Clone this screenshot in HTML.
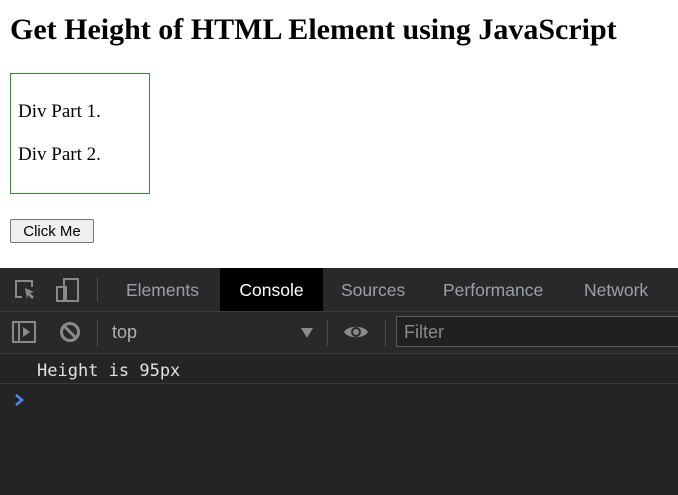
<!DOCTYPE html>
<html><head><style>
body{margin:0;width:678px;height:495px;overflow:hidden;background:#fff;font-family:"Liberation Serif",serif;position:relative}
h1{position:absolute;left:10px;top:13px;margin:0;font-size:30px;font-weight:bold;white-space:nowrap}
.box{position:absolute;left:10px;top:73px;width:138px;height:119px;border:1px solid #3a8a3a}
.box p{position:absolute;left:7px;margin:0;font-size:19px}
button{position:absolute;left:10px;top:219px;width:84px;height:24px;font-family:"Liberation Sans",sans-serif;font-size:15px;background:#efefef;border:1px solid #767676;border-radius:2px;padding:0}
.dt{position:absolute;left:0;top:268px;width:678px;height:227px;background:#242424;font-family:"Liberation Sans",sans-serif}
.tabs{position:absolute;left:0;top:0;width:678px;height:43px;background:#29292b;border-bottom:1px solid #3d3d3d}
.tab{position:absolute;top:0;height:43px;line-height:44px;color:#9aa0a6;font-size:17.5px}
.tb{position:absolute;left:0;top:44px;width:678px;height:41px;background:#29292b;border-bottom:1px solid #3d3d3d}
.sep{position:absolute;width:1px;background:#4a4a4a}
</style></head><body>
<h1>Get Height of HTML Element using JavaScript</h1>
<div class="box"><p style="top:27px">Div Part 1.</p><p style="top:70px">Div Part 2.</p></div>
<button>Click Me</button>
<div class="dt">
<div class="tabs">
<svg style="position:absolute;left:14px;top:11px" width="24" height="22" viewBox="0 0 24 22" fill="none" stroke="#8a8a8a" stroke-width="2"><path d="M8 18H2V2h16v6"/><path d="M11 9l9 4-4 1 4 4-2 2-4-4-1 4z" fill="#8a8a8a" stroke="none"/></svg>
<svg style="position:absolute;left:55px;top:10px" width="26" height="24" viewBox="0 0 26 24" fill="none" stroke="#8a8a8a" stroke-width="2"><rect x="9" y="1" width="14" height="22"/><rect x="2" y="9" width="9" height="14"/></svg>
<div class="sep" style="left:97px;top:10px;height:24px"></div>
<div class="tab" style="left:126px">Elements</div>
<div class="tab" style="left:220px;width:103px;background:#000;color:#fff;text-align:center">Console</div>
<div class="tab" style="left:341px">Sources</div>
<div class="tab" style="left:443px">Performance</div>
<div class="tab" style="left:584px">Network</div>
</div>
<div class="tb">
<svg style="position:absolute;left:12px;top:9px" width="24" height="22" viewBox="0 0 24 22" fill="none" stroke="#8a8a8a" stroke-width="2"><rect x="1" y="1" width="22" height="20"/><path d="M7 1v20"/><path d="M11 6l7 5-7 5z" fill="#8a8a8a" stroke="none"/></svg>
<svg style="position:absolute;left:59px;top:9px" width="22" height="22" viewBox="0 0 22 22" fill="none" stroke="#8a8a8a" stroke-width="3"><circle cx="11" cy="11" r="8.5"/><path d="M5 5l12 12"/></svg>
<div class="sep" style="left:97px;top:8px;height:26px"></div>
<div style="position:absolute;left:112px;top:10px;color:#b0b0b0;font-size:18px">top</div>
<svg style="position:absolute;left:301px;top:16px" width="12" height="10"><path d="M0 0h12L6 10z" fill="#8a8a8a"/></svg>
<div class="sep" style="left:327px;top:8px;height:26px"></div>
<svg style="position:absolute;left:343px;top:11px" width="26" height="18" viewBox="0 0 26 18"><path d="M1 9C5 2 21 2 25 9 21 16 5 16 1 9z" fill="#8a8a8a"/><circle cx="13" cy="9" r="5" fill="#29292b"/><circle cx="13" cy="9" r="3" fill="#8a8a8a"/></svg>
<div class="sep" style="left:385px;top:8px;height:26px"></div>
<div style="position:absolute;left:396px;top:4px;width:290px;height:31px;border:1px solid #5a5a5a;background:#202020;color:#8a8a8a;font-size:18px;line-height:31px;padding-left:7px;box-sizing:border-box">Filter</div>
</div>
<div style="position:absolute;left:0;top:86px;width:678px;height:30px;border-bottom:1px solid #3a3a3a;color:#e0e0e0;font-family:'DejaVu Sans Mono','Liberation Mono',monospace;font-size:17px;line-height:34px;padding-left:37px;box-sizing:border-box">Height is 95px</div>
<svg style="position:absolute;left:14px;top:126px" width="10" height="12"><path d="M2 1l6 5-6 5" fill="none" stroke="#4a8df8" stroke-width="2.5"/></svg>
</div>
</body></html>
